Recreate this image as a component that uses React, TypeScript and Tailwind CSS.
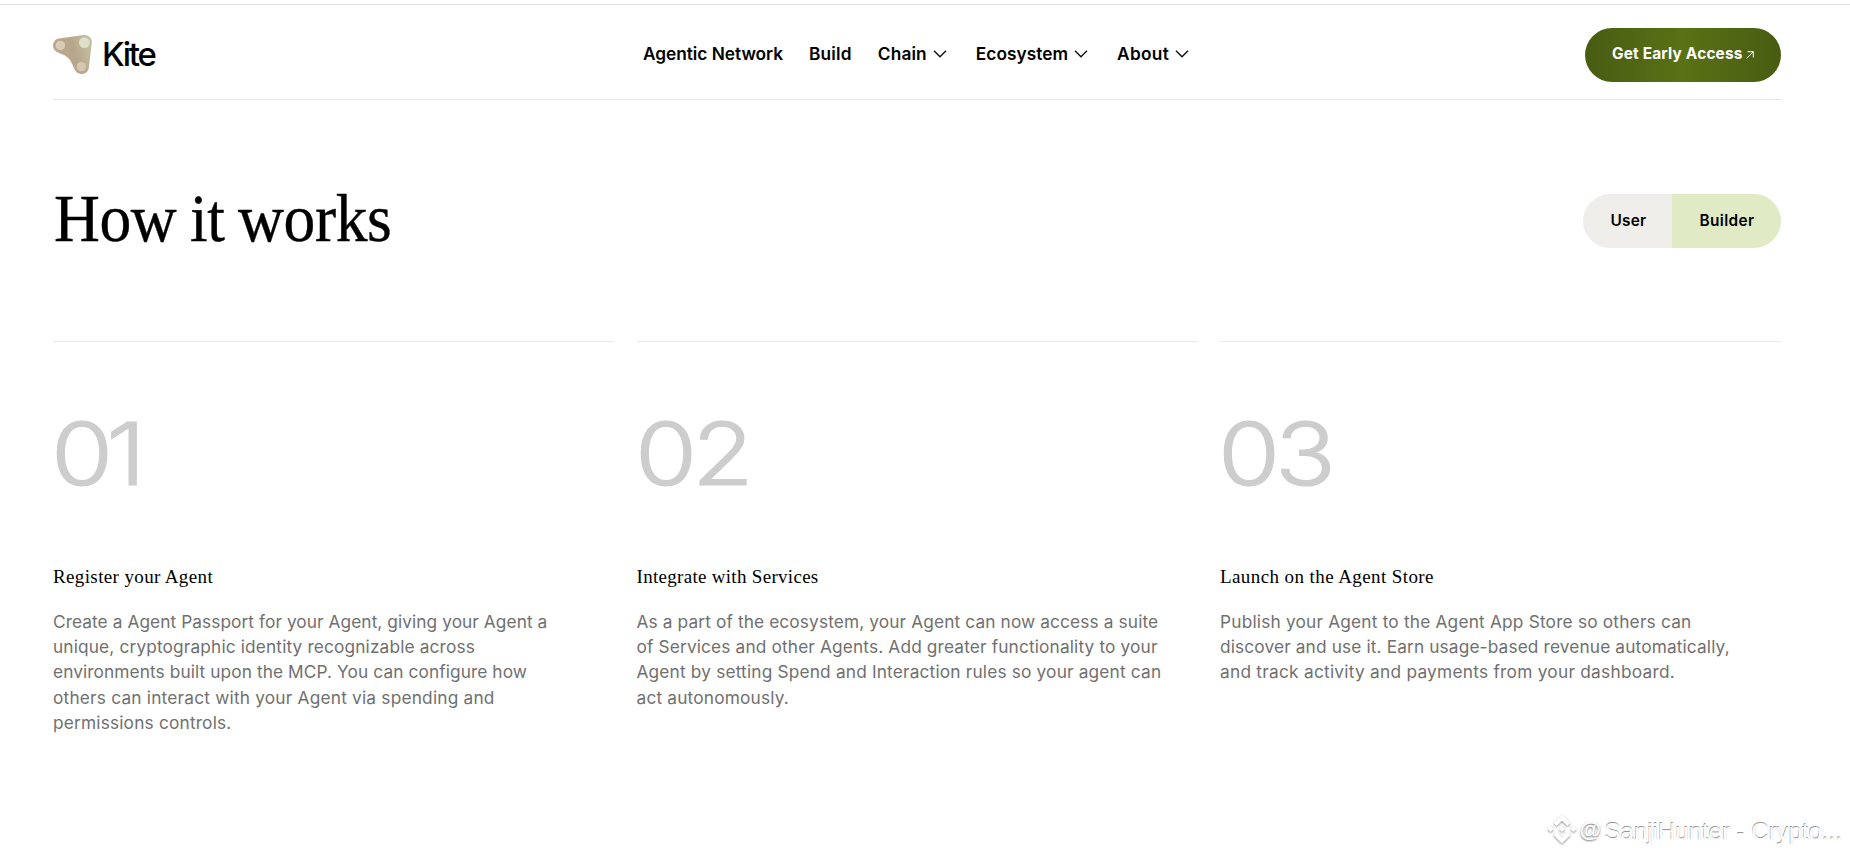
interface NavItem {
  label: string;
  tracking: string;
  hasMenu?: boolean;
}

interface Step {
  number: string;
  numberClass: string;
  title: string;
  titleClass: string;
  lines: { text: string; tracking: string }[];
}

const navItems: NavItem[] = [
  { label: 'Agentic Network', tracking: 'tracking-[-0.03px]' },
  { label: 'Build', tracking: 'tracking-[0.2px]' },
  { label: 'Chain', tracking: 'tracking-[0.13px]', hasMenu: true },
  { label: 'Ecosystem', tracking: 'tracking-[0.04px]', hasMenu: true },
  { label: 'About', tracking: 'tracking-[0.28px]', hasMenu: true },
];

const steps: Step[] = [
  {
    number: '01',
    numberClass: 'tracking-[-6px]',
    title: 'Register your Agent',
    titleClass: 'tracking-[0.37px]',
    lines: [
      { text: 'Create a Agent Passport for your Agent, giving your Agent a', tracking: 'tracking-[0.07px]' },
      { text: 'unique, cryptographic identity recognizable across', tracking: 'tracking-[0.14px]' },
      { text: 'environments built upon the MCP. You can configure how', tracking: 'tracking-[0.09px]' },
      { text: 'others can interact with your Agent via spending and', tracking: 'tracking-[0.2px]' },
      { text: 'permissions controls.', tracking: 'tracking-[0.18px]' },
    ],
  },
  {
    number: '02',
    numberClass: 'tracking-[-4.5px]',
    title: 'Integrate with Services',
    titleClass: 'tracking-[0.3px]',
    lines: [
      { text: 'As a part of the ecosystem, your Agent can now access a suite', tracking: 'tracking-[0.12px]' },
      { text: 'of Services and other Agents. Add greater functionality to your', tracking: 'tracking-[0.14px]' },
      { text: 'Agent by setting Spend and Interaction rules so your agent can', tracking: 'tracking-[0.17px]' },
      { text: 'act autonomously.', tracking: 'tracking-[0.18px]' },
    ],
  },
  {
    number: '03',
    numberClass: 'tracking-[-4.5px]',
    title: 'Launch on the Agent Store',
    titleClass: 'tracking-[0.41px]',
    lines: [
      { text: 'Publish your Agent to the Agent App Store so others can', tracking: 'tracking-[0.19px]' },
      { text: 'discover and use it. Earn usage-based revenue automatically,', tracking: 'tracking-[0.13px]' },
      { text: 'and track activity and payments from your dashboard.', tracking: 'tracking-[0.25px]' },
    ],
  },
];

const KiteLogo = () => (
  <svg width="39" height="40" viewBox="0 0 39 40" fill="none">
    <defs>
      <linearGradient id="kite-body" x1="4" y1="18" x2="36" y2="8" gradientUnits="userSpaceOnUse">
        <stop stopColor="#c0a78d" />
        <stop offset="0.5" stopColor="#b7a68b" />
        <stop offset="1" stopColor="#c3bda0" />
      </linearGradient>
    </defs>
    <path
      d="M6.2 3.4 30.6.1C35.6-.3 39.2 3.3 38.8 8L35.9 32.5C35.3 36.9 32.2 39 28.5 39 25 39 22.3 36.8 21 33.3 18.4 26.2 16 21 6.5 18.2 2.5 17 0 14.2 0 10.6 0 6.8 2.6 3.9 6.2 3.4Z"
      fill="url(#kite-body)"
    />
    <circle cx="7.4" cy="10.4" r="4.7" fill="#d9cdb8" />
    <circle cx="31.4" cy="7.6" r="5.4" fill="#dfe0c9" />
    <circle cx="28.2" cy="31.6" r="4.7" fill="#d5c8b1" />
  </svg>
);

const Chevron = () => (
  <svg className="mr-px ml-[5px]" width="17" height="17" viewBox="0 0 17 17" fill="none" stroke="#111" strokeWidth="1.4">
    <path d="M2 5.8 8 11.8 14 5.8" />
  </svg>
);

const Header = () => (
  <header className="mx-auto flex h-[95px] w-[1728px] items-start border-b border-[#e6e6e6] pt-[23px]">
    <a href="#" className="flex h-[54px] w-[590px] items-center">
      <KiteLogo />
      <span className="ml-[10px] text-[33px] font-medium tracking-[-2.3px]">Kite</span>
    </a>
    <nav className="flex h-[54px] items-center gap-[26px] pb-[3px] text-[17.3px] font-semibold">
      {navItems.map(({ label, tracking, hasMenu }) => (
        <a key={label} href="#" className="flex items-center whitespace-nowrap">
          <span className={tracking}>{label}</span>
          {hasMenu && <Chevron />}
        </a>
      ))}
    </nav>
    <button
      type="button"
      className="ml-auto flex h-[54px] w-[196px] items-center rounded-full bg-linear-to-r from-[#485c12] via-[#5a7115] to-[#485c12] pb-[3px] pl-[27px] text-[15.4px] font-bold tracking-[0.18px] whitespace-nowrap text-white"
    >
      Get Early Access
      <svg className="mt-0.5 ml-[3px]" width="8" height="8" viewBox="0 0 8 8" fill="none" stroke="white">
        <path d="M1.5.7H7.3V6.5M7.3.7.7 7.3" />
      </svg>
    </button>
  </header>
);

const StepCard = ({ number, numberClass, title, titleClass, lines }: Step) => (
  <article className="border-t border-[#e9e9e9] pt-[68px]">
    <p
      className={`-ml-[2px] origin-left scale-x-[1.17] text-[86px] leading-[88px] font-[350] text-[#cdcdcd] [-webkit-text-stroke:1.2px_#cdcdcd] ${numberClass}`}
    >
      {number}
    </p>
    <h3 className={`mt-[65px] font-['Liberation_Serif',serif] text-[19px] leading-7 ${titleClass}`}>{title}</h3>
    <p className="mt-[18px] text-[17.3px] leading-[25.2px] text-[#707070]">
      {lines.map(({ text, tracking }) => (
        <span key={text} className={`block whitespace-nowrap ${tracking}`}>
          {text}
        </span>
      ))}
    </p>
  </article>
);

const Watermark = () => (
  <div className="absolute right-[8px] bottom-[7px] flex items-center text-white">
    <svg
      className="mb-0.5 drop-shadow-[0_1px_1px_rgba(0,0,0,0.45)]"
      width="30"
      height="30"
      viewBox="0 0 30 30"
      fill="white"
    >
      <path d="M15 .5 23.5 9 20.4 12.1 15 6.7 9.6 12.1 6.5 9ZM3.6 11.9 6.7 15 3.6 18.1.5 15ZM15 11.9 18.1 15 15 18.1 11.9 15ZM26.4 11.9 29.5 15 26.4 18.1 23.3 15ZM9.6 17.9 15 23.3 20.4 17.9 23.5 21 15 29.5 6.5 21Z" />
    </svg>
    <span className="mb-0.5 ml-[3px] w-[25px] font-['Liberation_Sans',sans-serif] text-[22px] font-bold [text-shadow:0_1px_2px_rgba(0,0,0,0.6)]">
      @
    </span>
    <span className="pt-1 font-['Liberation_Sans',sans-serif] text-[24px] [text-shadow:-0.4px_-0.8px_0_#939393,0.4px_0.4px_0_#e2e2e2]">
      SanjiHunter - Crypto...
    </span>
  </div>
);

export default function App() {
  return (
    <div className="relative h-[857px] w-[1850px] overflow-hidden bg-white pt-1 font-['Inter',sans-serif] text-black">
      <div className="border-t border-[#dedede] pr-4">
        <Header />
        <main className="mx-auto w-[1728px]">
          <div className="mt-[94px] flex h-[54px] items-center justify-between">
            <h1 className="origin-left scale-x-[0.948] pb-[5px] pl-px font-['Liberation_Serif',serif] text-[67px] leading-none tracking-[-0.4px] whitespace-nowrap [-webkit-text-stroke:0.4px_black] [word-spacing:-2px]">
              How it works
            </h1>
            <div className="flex h-[54px] overflow-hidden rounded-full text-[15.4px] font-semibold">
              <button type="button" className="w-[89px] bg-[#efeeea] pl-0.5 tracking-[0.2px]">
                User
              </button>
              <button type="button" className="w-[109px] bg-[#e0ebc6] pl-px tracking-[0.4px]">
                Builder
              </button>
            </div>
          </div>
          <section className="mt-[93px] grid grid-cols-3 gap-x-[22.5px]">
            {steps.map((step) => (
              <StepCard key={step.number} {...step} />
            ))}
          </section>
        </main>
      </div>
      <Watermark />
    </div>
  );
}
